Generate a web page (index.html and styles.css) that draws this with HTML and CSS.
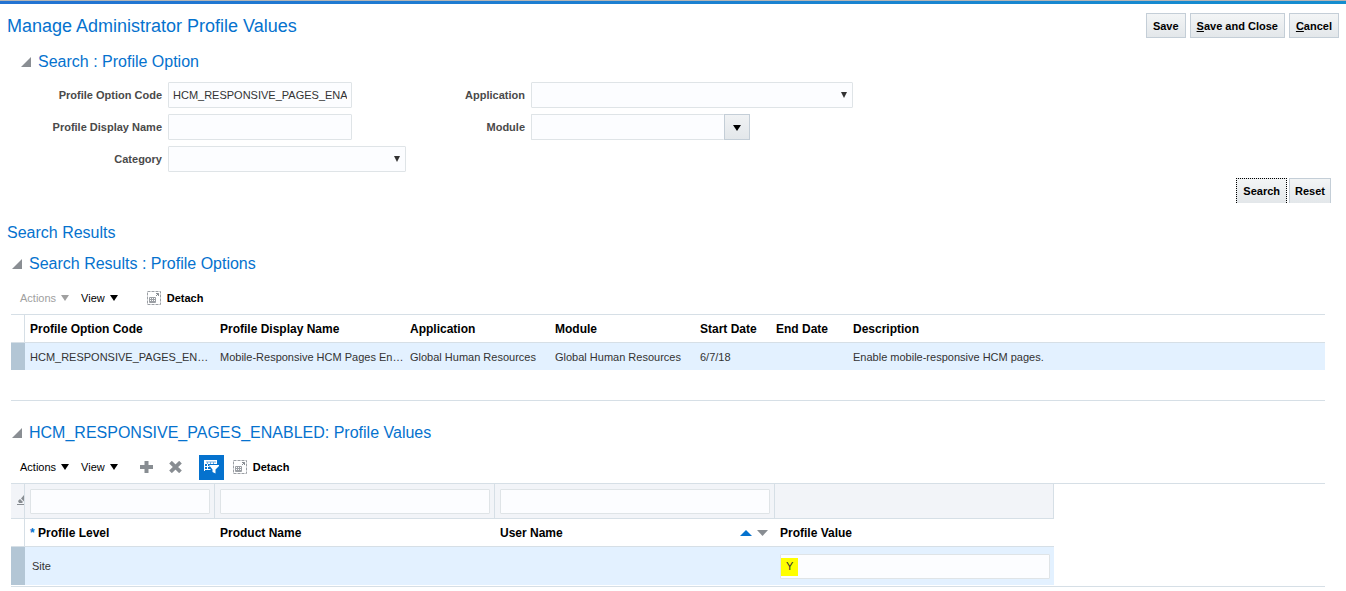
FILE: index.html
```
<!DOCTYPE html>
<html lang="en">
<head>
    <meta charset="UTF-8">
    <meta name="viewport" content="width=device-width, initial-scale=1.0">
    <title>Manage Administrator Profile Values</title>
    <link rel="stylesheet" href="styles.css">
</head>
<body>
    <div class="top-bar"></div>

    <header class="page-header">
        <h1>Manage Administrator Profile Values</h1>
        <div class="page-actions">
            <button type="button" class="btn">Save</button>
            <button type="button" class="btn"><u>S</u>ave and Close</button>
            <button type="button" class="btn"><u>C</u>ancel</button>
        </div>
    </header>

    <!-- Search form -->
    <form class="search">
        <h2 class="disclosure search-title"><svg class="tri" viewBox="0 0 10 10"><path d="M10 0V10H0Z"/></svg>Search : Profile Option</h2>
        <div class="search-fields">
            <div class="field-group">
                <label for="optionCode">Profile Option Code</label>
                <input type="text" id="optionCode" class="short" value="HCM_RESPONSIVE_PAGES_ENABLED">
                <label for="displayName">Profile Display Name</label>
                <input type="text" id="displayName" class="short">
                <label for="category">Category</label>
                <div class="select category"><select id="category"><option></option></select></div>
            </div>
            <div class="field-group second">
                <label for="application">Application</label>
                <div class="select"><select id="application"><option></option></select></div>
                <label for="module">Module</label>
                <div class="combo">
                    <input type="text" id="module">
                    <button type="button" aria-label="Module list"><span class="caret"></span></button>
                </div>
            </div>
        </div>
        <div class="search-actions">
            <button type="button" class="btn focused">Search</button>
            <button type="button" class="btn">Reset</button>
        </div>
    </form>

    <h2 class="results-title">Search Results</h2>

    <!-- Profile options -->
    <section class="panel options">
        <h2 class="disclosure"><svg class="tri" viewBox="0 0 10 10"><path d="M10 0V10H0Z"/></svg>Search Results : Profile Options</h2>
        <div class="toolbar">
            <button type="button" class="menu" disabled>Actions <span class="caret"></span></button>
            <button type="button" class="menu">View <span class="caret"></span></button>
            <button type="button" class="detach">
                <svg viewBox="0 0 14 14" width="14" height="14"><path d="M.5 .5H13.500V13.500H.5Z" fill="none" stroke="#9b9fa4" stroke-dasharray="3 1"/><path d="M2.500 6.500h6v5h-6zM2 8.500h7M2 10.500h7M4.500 7v5M6.500 7v5" fill="none" stroke="#9b9fa4"/><path d="M9 5l2.500-2.500M9 2.500h2.500V5" fill="none" stroke="#888d92"/></svg>
                Detach
            </button>
        </div>
        <div class="table-box">
            <table class="options-table">
                <colgroup>
                    <col class="gutter-col"><col class="w190"><col class="w190"><col class="w145"><col class="w145"><col class="w76"><col class="w77"><col>
                </colgroup>
                <tr>
                    <th class="gutter"></th>
                    <th>Profile Option Code</th>
                    <th>Profile Display Name</th>
                    <th>Application</th>
                    <th>Module</th>
                    <th>Start Date</th>
                    <th>End Date</th>
                    <th>Description</th>
                </tr>
                <tr class="selected">
                    <td class="gutter"></td>
                    <td>HCM_RESPONSIVE_PAGES_ENABLED</td>
                    <td>Mobile-Responsive HCM Pages Enabled</td>
                    <td>Global Human Resources</td>
                    <td>Global Human Resources</td>
                    <td>6/7/18</td>
                    <td></td>
                    <td>Enable mobile-responsive HCM pages.</td>
                </tr>
            </table>
        </div>
    </section>

    <!-- Profile values -->
    <section class="panel">
        <h2 class="disclosure"><svg class="tri" viewBox="0 0 10 10"><path d="M10 0V10H0Z"/></svg>HCM_RESPONSIVE_PAGES_ENABLED: Profile Values</h2>
        <div class="toolbar">
            <button type="button" class="menu">Actions <span class="caret"></span></button>
            <button type="button" class="menu">View <span class="caret"></span></button>
            <button type="button" class="icon-btn add" aria-label="Add">
                <svg viewBox="0 0 13 12" width="13" height="12"><path d="M6.500 0V12M0 6H13" stroke="#888d92" stroke-width="4"/></svg>
            </button>
            <button type="button" class="icon-btn delete" aria-label="Delete">
                <svg viewBox="0 0 13 12" width="13" height="12"><path d="M1.500 1.200L11.500 10.800M11.500 1.200L1.500 10.800" stroke="#888d92" stroke-width="3.800"/></svg>
            </button>
            <button type="button" class="icon-btn filter" aria-label="Query by example">
                <svg viewBox="0 0 15 14" width="15" height="14"><path d="M0 0H13V4H0Z" fill="#fff"/><path d="M0 6.500H5.500M0 9.500H6.500M.5 4V11M3.500 4V10" stroke="#fff" fill="none"/><path d="M2 2H12M3.500 2V4M6.500 2V4M9.500 2V4" stroke="#6eace4"/><path d="M5 5H15V6L11.500 9.500V13.500L8.500 12V9.500Z" fill="#fff"/></svg>
            </button>
            <button type="button" class="detach">
                <svg viewBox="0 0 14 14" width="14" height="14"><path d="M.5 .5H13.500V13.500H.5Z" fill="none" stroke="#9b9fa4" stroke-dasharray="3 1"/><path d="M2.500 6.500h6v5h-6zM2 8.500h7M2 10.500h7M4.500 7v5M6.500 7v5" fill="none" stroke="#9b9fa4"/><path d="M9 5l2.500-2.500M9 2.500h2.500V5" fill="none" stroke="#888d92"/></svg>
                Detach
            </button>
        </div>
        <div class="table-box values">
            <table class="values-table">
                <colgroup>
                    <col class="gutter-col"><col class="w190"><col class="w280"><col class="w280"><col class="w279">
                </colgroup>
                <tr class="filters">
                    <td class="gutter"><svg viewBox="0 0 12 10" width="12" height="10"><path d="M0 9.500H12" stroke="#888d92"/><path d="M1 6L3 4L6 7L5 8H2Z" fill="#888d92"/><path d="M4 3.500L7 0L11 2L7 6.500Z" fill="#888d92"/></svg></td>
                    <td><input type="text" aria-label="Filter Profile Level"></td>
                    <td><input type="text" aria-label="Filter Product Name"></td>
                    <td><input type="text" aria-label="Filter User Name"></td>
                    <td></td>
                </tr>
                <tr>
                    <th class="gutter"></th>
                    <th><span class="required">*</span> Profile Level</th>
                    <th>Product Name</th>
                    <th>
                        <div class="sortable">User Name
                            <svg viewBox="0 0 28 6" width="28" height="6"><path d="M0 6L6 0L12 6Z" fill="#0572ce"/><path d="M17 0H28L22.500 6Z" fill="#888d92"/></svg>
                        </div>
                    </th>
                    <th>Profile Value</th>
                </tr>
                <tr class="selected">
                    <td class="gutter"></td>
                    <td>Site</td>
                    <td></td>
                    <td></td>
                    <td><input type="text" class="marked" aria-label="Profile Value" value="Y"></td>
                </tr>
            </table>
        </div>
    </section>
</body>
</html>
```

FILE: styles.css
```
* {
    box-sizing: border-box;
}

body {
    margin: 0;
    background-color: #fff;
    color: #333;
    font-family: "Liberation Sans", Arial, sans-serif;
    font-size: 11px;
}

.top-bar {
    height: 4px;
    border-top: 1px solid #b5b5b5;
    background: linear-gradient(to right, #2373d2, #148dcf);
}

h1, h2 {
    margin: 0;
    color: #0572ce;
    font-weight: normal;
    font-size: 16px;
    line-height: 20px;
}

h1 {
    font-size: 18px;
}

button, input, select {
    font-family: inherit;
    font-size: 11px;
}

/* Header */
.page-header {
    display: flex;
    justify-content: space-between;
    align-items: center;
    padding: 9px 7px 0;
}

.page-actions {
    display: flex;
    gap: 4px;
}

.btn {
    height: 25px;
    padding: 0 6px;
    border: 1px solid #c4ced7;
    background: linear-gradient(#f3f5f6, #e3e7ea);
    color: #000;
    font-weight: bold;
}

/* Search form */
.search-title {
    padding: 14px 0 0 21px;
}

.disclosure {
    display: flex;
    align-items: center;
}

.tri {
    width: 10px;
    height: 10px;
    margin-right: 7px;
    fill: #8a8e93;
}

.search-fields {
    display: flex;
    padding-top: 10px;
}

.field-group {
    display: grid;
    grid-template-columns: 162px 238px;
    grid-auto-rows: 26px;
    gap: 6px;
    align-items: center;
}

.field-group.second {
    grid-template-columns: 119px 322px;
}

label {
    text-align: right;
    color: #4a4a4a;
    font-weight: bold;
}

input, select {
    width: 100%;
    height: 26px;
    padding: 0 4px;
    border: 1px solid #dfe4e7;
    border-radius: 1px;
    background-color: #fcfdff;
    color: #333;
}

.short {
    width: 184px;
}

.select {
    position: relative;
}

select {
    appearance: none;
}

.select::after {
    content: "";
    position: absolute;
    top: 10px;
    right: 6px;
    border: 3px solid transparent;
    border-top: 6px solid #333;
    border-bottom: 0;
}

.combo {
    display: flex;
    width: 219px;
}

.combo button {
    flex: 0 0 26px;
    padding: 0;
    border: 1px solid #c4ced7;
    background: linear-gradient(#f0f2f4, #e3e7ea);
}

.combo input {
    border-right: 0;
}

.caret {
    display: inline-block;
    border: 4px solid transparent;
    border-top: 6px solid #000;
    border-bottom: 0;
}

.search-actions {
    display: flex;
    justify-content: flex-end;
    gap: 2px;
    padding: 6px 15px 0 0;
}

.search-actions .btn {
    padding: 0 5px;
    border-bottom: 0;
}

.search-actions .focused {
    padding: 0 6px;
    border: 1px dotted #000;
    border-bottom: 0;
}

.results-title {
    padding: 20px 7px 0;
}

/* Panels */
.panel {
    padding: 11px 21px 0 11px;
}

.panel .disclosure {
    padding-left: 1px;
}

.toolbar {
    display: flex;
    align-items: center;
    height: 26px;
    margin-top: 11px;
    padding-left: 9px;
}

.toolbar button {
    padding: 0;
    border: 0;
    background: none;
    color: #000;
}

.menu {
    display: flex;
    align-items: center;
    gap: 5px;
    margin-right: 12px;
}

.toolbar .menu:disabled {
    color: #a0a0a0;
}

.menu:disabled .caret {
    border-top-color: #a0a0a0;
}

.toolbar .detach {
    display: flex;
    align-items: center;
    gap: 6px;
    margin-left: 17px;
    font-weight: bold;
}

.icon-btn {
    display: flex;
    align-items: center;
    justify-content: center;
}

.add {
    margin-left: 10px;
}

.delete {
    margin-left: 16px;
}

.toolbar .filter {
    width: 25px;
    height: 25px;
    margin-left: 17px;
    background-color: #0572ce;
}

.toolbar .filter + .detach {
    margin-left: 9px;
}

/* Tables */
.table-box {
    margin-top: 3px;
    padding-bottom: 30px;
    border-top: 1px solid #d6dfe6;
    border-bottom: 1px solid #d6dfe6;
}

.options + .panel {
    padding-top: 22px;
}

.table-box.values {
    padding-bottom: 1px;
}

table {
    width: 100%;
    table-layout: fixed;
    border-collapse: separate;
    border-spacing: 0;
}

.values-table {
    width: 1043px;
}

.gutter-col {
    width: 14px;
}

.w190 {
    width: 190px;
}

.w145 {
    width: 145px;
}

.w76 {
    width: 76px;
}

.w77 {
    width: 77px;
}

.w280 {
    width: 280px;
}

.w279 {
    width: 279px;
}

th, td {
    padding: 0 1px 0 5px;
    overflow: hidden;
    text-align: left;
    text-overflow: ellipsis;
    white-space: nowrap;
}

th {
    height: 28px;
    border-bottom: 1px solid #d6dfe6;
    color: #000;
    font-size: 12px;
}

td {
    height: 27px;
}

.gutter {
    padding: 0;
    border-right: 1px solid #d6dfe6;
}

.selected td {
    background-color: #e3f1ff;
}

.selected .gutter {
    border-right-color: #b3c6d5;
    background-color: #b3c6d5;
}

.filters td {
    height: 35px;
    border-right: 1px solid #d6dfe6;
    border-bottom: 1px solid #d6dfe6;
    background-color: #f2f4f8;
}

.filters td:not(.gutter) {
    padding: 0 4px 0 5px;
}

.filters .gutter {
    padding-left: 6px;
    text-overflow: clip;
}

.values-table input {
    height: 25px;
}

.values-table .selected td {
    height: 38px;
    padding-right: 4px;
}

.values-table .selected td:nth-child(2) {
    padding-left: 7px;
}

.required {
    color: #0572ce;
}

.sortable {
    display: flex;
    align-items: center;
    justify-content: space-between;
    padding-right: 6px;
}

.values-table .marked {
    padding-left: 5px;
    background-image: linear-gradient(#ff0, #ff0);
    background-position: 0 3px;
    background-repeat: no-repeat;
    background-size: 17px 18px;
}
```
